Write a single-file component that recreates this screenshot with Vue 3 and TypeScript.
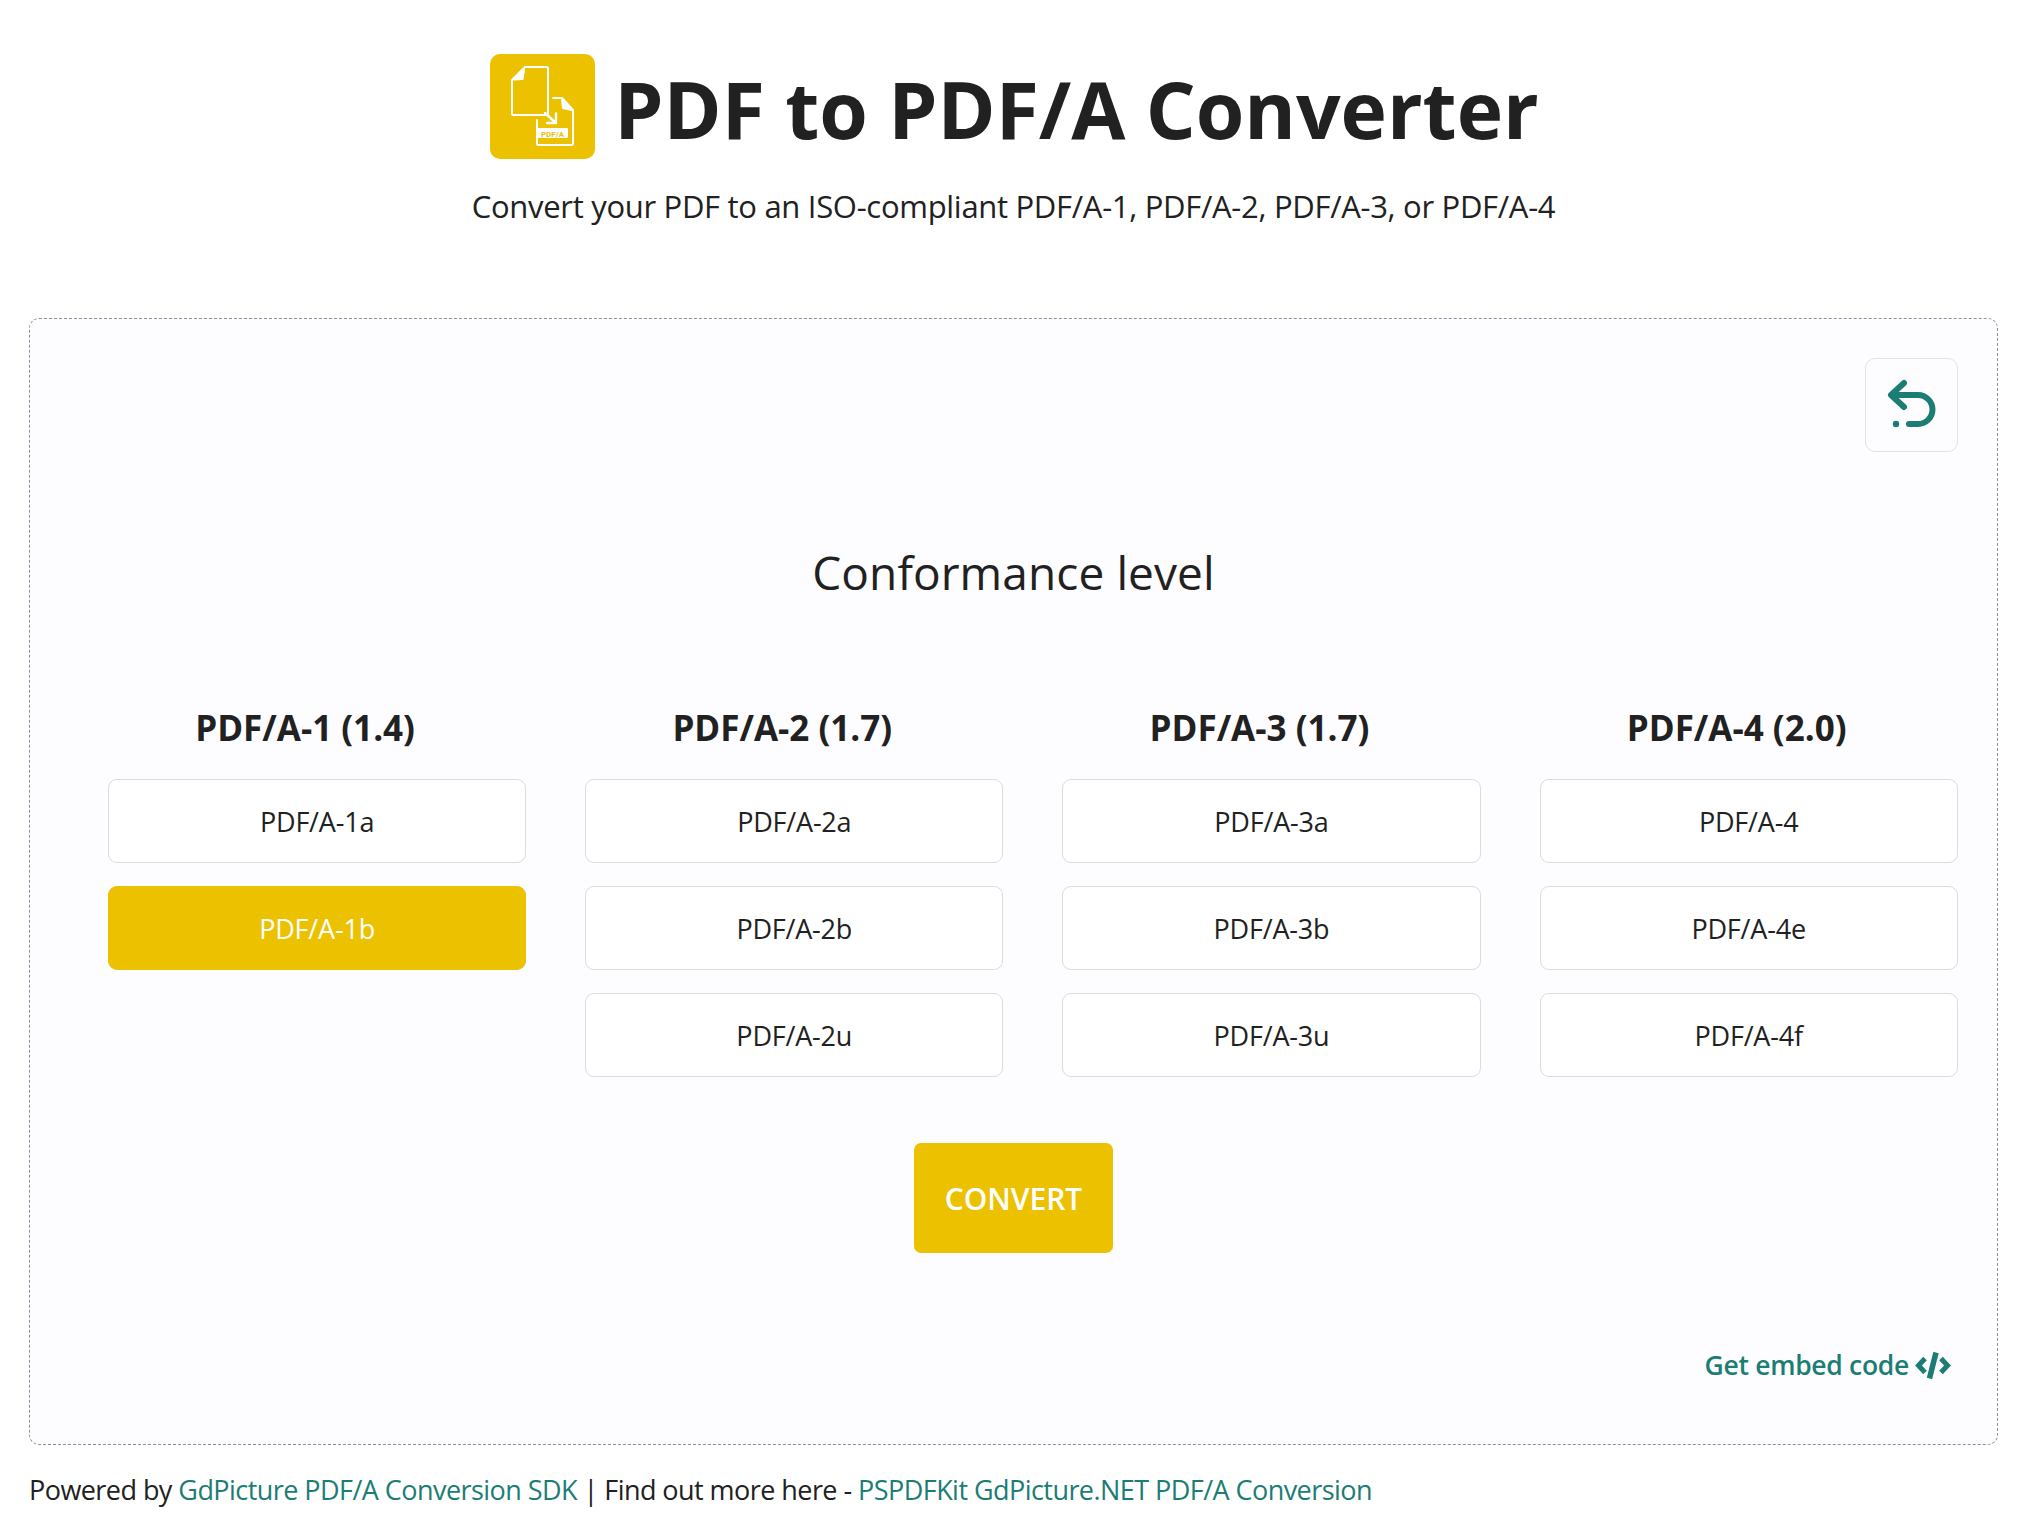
<script setup lang="ts">
const groups = [
  { title: 'PDF/A-1 (1.4)', levels: ['PDF/A-1a', 'PDF/A-1b'] },
  { title: 'PDF/A-2 (1.7)', levels: ['PDF/A-2a', 'PDF/A-2b', 'PDF/A-2u'] },
  { title: 'PDF/A-3 (1.7)', levels: ['PDF/A-3a', 'PDF/A-3b', 'PDF/A-3u'] },
  { title: 'PDF/A-4 (2.0)', levels: ['PDF/A-4', 'PDF/A-4e', 'PDF/A-4f'] }
]
const selected = 'PDF/A-1b'
</script>

<template>
  <div class="page">
    <header class="head">
      <div class="title-row">
        <div class="logo">
          <svg width="105" height="105" viewBox="0 0 105 105" fill="none" stroke="#fff" stroke-width="2" stroke-linejoin="round" stroke-linecap="round">
            <path d="M35 13h21.500a1.500 1.500 0 0 1 1.500 1.500V59.500a1.500 1.500 0 0 1-1.500 1.500H23.500a1.500 1.500 0 0 1-1.500-1.500V26z" />
            <path d="M24 25.500l8.500-.5 1.500-9z" fill="#fff" />
            <path d="M55 59l11 10M66 59.500V69M57 69h9" stroke-width="2.400" />
            <path d="M63 44h9l11 12v33.500a1.500 1.500 0 0 1-1.500 1.500h-33a1.500 1.500 0 0 1-1.500-1.500V66" />
            <path d="M72 45l1 9 9 2z" fill="#fff" />
            <rect class="tag" x="47" y="74" width="31" height="10" rx="1" />
            <text class="tag-text" x="62.500" y="82.500">PDF/A</text>
          </svg>
        </div>
        <h1>PDF to PDF/A Converter</h1>
      </div>
      <p class="sub">Convert your PDF to an ISO-compliant PDF/A-1, PDF/A-2, PDF/A-3, or PDF/A-4</p>
    </header>

    <main class="card">
      <div class="back-row">
        <button class="back" aria-label="Back">
          <svg width="94" height="94" viewBox="0 0 94 94" fill="none" stroke="#1c7d74" stroke-width="6" stroke-linecap="round" stroke-linejoin="round">
            <path d="M39 25L26 37l13 12" />
            <path d="M27 37h26a14.500 14.500 0 0 1 0 29H44" />
            <path d="M31 66h.01" stroke-width="6.500" />
          </svg>
        </button>
      </div>

      <h2>Conformance level</h2>

      <div class="grid">
        <section v-for="g in groups" :key="g.title" class="col">
          <h3>{{ g.title }}</h3>
          <div class="levels">
            <button v-for="l in g.levels" :key="l" class="level" :class="{ active: l === selected }">{{ l }}</button>
          </div>
        </section>
      </div>

      <div class="action">
        <button class="convert">CONVERT</button>
      </div>

      <div class="embed">
        <a href="#">Get embed code</a>
        <svg width="36" height="27" viewBox="0 0 36 27" fill="none" stroke="#1c7d74" stroke-width="5" stroke-linecap="butt" stroke-linejoin="miter">
          <path d="M10 6.500L3.500 13.500l6.500 7" />
          <path d="M26 6.500l6.500 7-6.500 7" />
          <path d="M21 .5l-6.500 26" stroke-width="5.500" />
        </svg>
      </div>
    </main>

    <footer class="foot">
      Powered by <a href="#">GdPicture PDF/A Conversion SDK</a> | Find out more here - <a href="#">PSPDFKit GdPicture.NET PDF/A Conversion</a>
    </footer>
  </div>
</template>

<style scoped>
.page {
  width: 2034px;
  height: 1526px;
  box-sizing: border-box;
  padding: 0 36px 0 29px;
  font-family: "Open Sans", "Noto Sans", sans-serif;
  color: #212121;
  overflow: hidden;
}

.head {
  padding-top: 54px;
  text-align: center;
}

.title-row {
  display: flex;
  justify-content: center;
  align-items: center;
  gap: 19px;
  padding-left: 2px;
}

.logo {
  width: 105px;
  height: 105px;
  background: #ecc100;
  border-radius: 10px;
  flex-shrink: 0;
}

.tag {
  fill: #fff;
  stroke: none;
}

.tag-text {
  font-family: "Roboto", sans-serif;
  font-size: 8px;
  font-weight: 700;
  fill: #ecc100;
  stroke: none;
  text-anchor: middle;
}

h1 {
  margin: 0;
  padding-top: 5px;
  font-size: 78.5px;
  font-weight: 700;
  line-height: 100px;
}

.sub {
  margin: 27px 0 0;
  font-size: 31px;
  line-height: 40px;
  letter-spacing: -0.3px;
}

.card {
  margin-top: 92px;
  height: 1127px;
  box-sizing: border-box;
  border: 1px dashed #8a8f9c;
  border-radius: 10px;
  background: #fdfdff;
  padding: 39px 39px 0 78px;
}

.back-row {
  display: flex;
  justify-content: flex-end;
}

.back {
  width: 93px;
  height: 94px;
  display: flex;
  align-items: center;
  justify-content: center;
  padding: 0;
  border: 1.5px solid #e2e2e6;
  border-radius: 10px;
  background: #fdfdff;
}

.back svg {
  flex-shrink: 0;
}

h2 {
  margin: 89px 0 0 -39px;
  text-align: center;
  font-size: 46px;
  font-weight: 400;
  line-height: 62px;
  letter-spacing: 0.1px;
}

.grid {
  margin-top: 103px;
  display: grid;
  grid-template-columns: repeat(4, 418.2px);
  column-gap: 59px;
}

h3 {
  margin: 0 24px 0 0;
  text-align: center;
  font-size: 35px;
  font-weight: 700;
  line-height: 44px;
}

.levels {
  margin-top: 29px;
  display: flex;
  flex-direction: column;
  gap: 23px;
}

.level {
  height: 84px;
  padding: 0;
  border: 1.5px solid #dcdcdf;
  border-radius: 9px;
  background: #fff;
  color: #212121;
  font-family: inherit;
  font-size: 27px;
  letter-spacing: -0.2px;
}

.level.active {
  background: #ecc100;
  border-color: #ecc100;
  color: #fff;
}

.action {
  margin: 66px 0 0 -39px;
  display: flex;
  justify-content: center;
}

.convert {
  width: 199px;
  height: 110px;
  padding: 0;
  border: none;
  border-radius: 7px;
  background: #ecc100;
  color: #fff;
  font-family: inherit;
  font-size: 30px;
  font-weight: 600;
}

.embed {
  margin-top: 93px;
  padding-right: 7px;
  display: flex;
  justify-content: flex-end;
  align-items: center;
  gap: 6px;
}

.embed a {
  color: #1c7d74;
  font-size: 26.5px;
  font-weight: 600;
  line-height: 38px;
  letter-spacing: -0.3px;
  text-decoration: none;
}

.foot {
  margin-top: 25px;
  font-size: 27px;
  line-height: 40px;
  letter-spacing: -0.55px;
  white-space: nowrap;
}

.foot a {
  color: #1c7d74;
  text-decoration: none;
}
</style>
